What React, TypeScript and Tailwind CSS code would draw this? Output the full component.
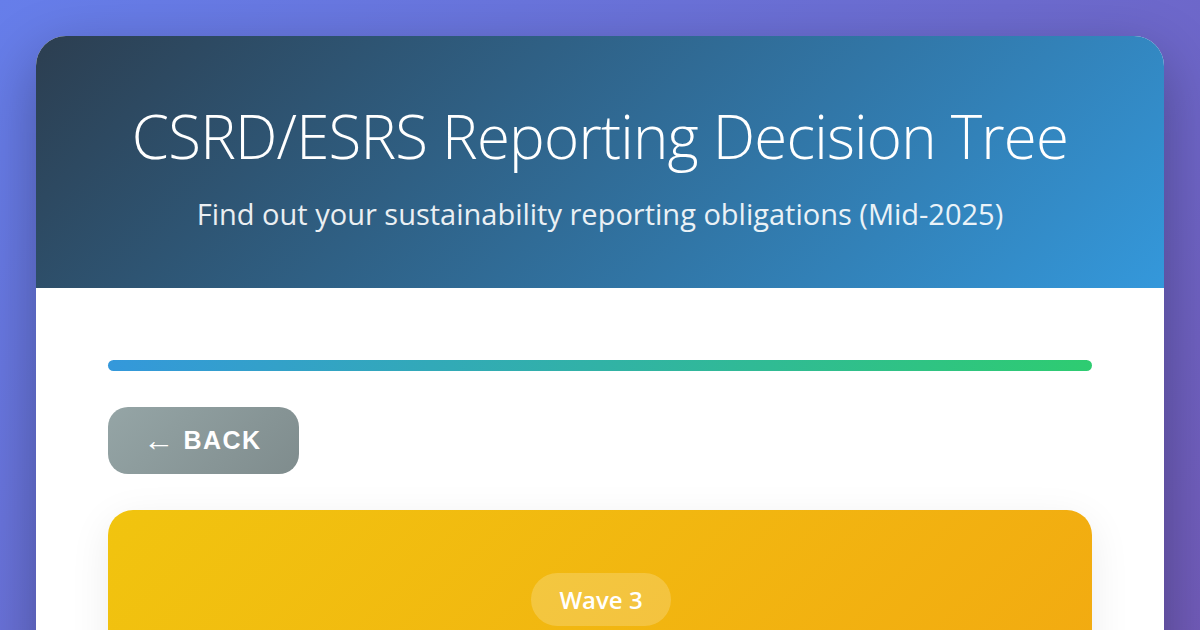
export default function App() {
  return (
    <div className="h-[630px] overflow-hidden">
      <div className="h-[1500px] bg-[linear-gradient(135deg,#667eea_0%,#764ba2_100%)] p-9 font-['Open_Sans','Liberation_Sans',sans-serif]">
        <div className="h-[1428px] overflow-hidden rounded-[30px] bg-white shadow-[0_20px_60px_rgba(0,0,0,0.3)]">
          <header className="flex h-[252px] flex-col items-center bg-[linear-gradient(135deg,#2c3e50_0%,#3498db_100%)] pt-[58px] text-center text-white">
            <h1 className="text-[60px] leading-[84px] font-light tracking-[-0.8px]">CSRD/ESRS Reporting Decision Tree</h1>
            <p className="mt-[17px] text-[29px] leading-[38px] opacity-90">
              Find out your sustainability reporting obligations (Mid-2025)
            </p>
          </header>
          <main className="px-[72px] pt-[72px]">
            <div className="h-[11px] rounded-full bg-[linear-gradient(90deg,#3498db,#2ecc71)]" />
            <button className="mt-9 flex h-[67px] w-[191px] items-center justify-center gap-[9px] rounded-[20px] bg-[linear-gradient(135deg,#95a5a6,#7f8c8d)] pr-[2px] font-['Liberation_Sans',sans-serif] text-[25px] font-bold tracking-[1.5px] text-white">
              <span className="text-[31px] leading-none font-normal tracking-normal">←</span>
              <span>BACK</span>
            </button>
            <section className="mt-9 flex h-[800px] flex-col items-center rounded-[25px] bg-[linear-gradient(135deg,#f1c40f,#f39c12)] pt-[63px] pl-0.5 shadow-[0_10px_40px_rgba(0,0,0,0.08)]">
              <span className="flex h-[53px] w-[140px] items-center justify-center rounded-full bg-white/20 text-[24px] font-semibold text-white">
                Wave 3
              </span>
            </section>
          </main>
        </div>
      </div>
    </div>
  );
}
